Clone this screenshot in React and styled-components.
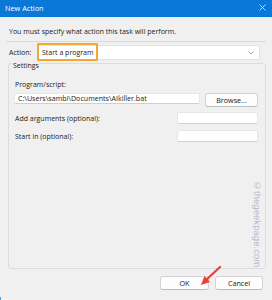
import React from "react";
import styled, { createGlobalStyle } from "styled-components";

const Global = createGlobalStyle`
  *, *::before, *::after { box-sizing: border-box; }
  html, body { margin: 0; padding: 0; }
  body {
    background: #f0f0f0;
    font-family: "Open Sans", "Noto Sans", sans-serif;
    font-size: 7px;
    color: #1a1a1a;
  }
`;

const Window = styled.div`
  position: relative;
  width: 272px;
  height: 300px;
  background: #f0f0f0;
  display: flex;
  flex-direction: column;
  overflow: hidden;
`;

const TitleBar = styled.div`
  flex: none;
  height: 19px;
  background: #0a78d7;
  color: #fff;
  display: flex;
  align-items: center;
  justify-content: space-between;
  padding: 0 6px 2px 5px;
  border-bottom: 2px solid #e9eef3;
`;

const Title = styled.span`
  font-size: 7.3px;
`;

const CloseIcon = styled.svg`
  width: 7px;
  height: 7px;
`;

const Body = styled.div`
  flex: 1;
  display: flex;
  flex-direction: column;
  padding: 0 6px;
`;

const Intro = styled.div`
  padding: 7px 3px 3px;
  line-height: 12px;
`;

const Separator = styled.div`
  height: 1px;
  background: #dadada;
`;

const ActionRow = styled.div`
  display: flex;
  align-items: center;
  margin-top: 3px;
  padding-left: 3px;
  height: 15px;
`;

const ActionLabel = styled.span`
  width: 29px;
  white-space: nowrap;
`;

const Label = styled.span`
  white-space: nowrap;
`;

const Select = styled.div`
  position: relative;
  flex: 1;
  height: 15px;
  margin-right: 6px;
  background: #fff;
  border: 1px solid #e2e2e2;
  border-radius: 2px;
  display: flex;
  align-items: center;
  justify-content: space-between;
  padding: 0 5px 0 3px;
`;

const Highlight = styled.div`
  position: absolute;
  left: -2px;
  top: -3px;
  width: 61px;
  height: 18px;
  border: 2px solid #f1a933;
  border-radius: 1px;
`;

const Chevron = styled.svg`
  width: 6px;
  height: 4px;
`;

const Group = styled.div`
  position: relative;
  flex: none;
  margin: 3px 0 0 2px;
  width: 258px;
  height: 206px;
  border: 1px solid #dcdcdc;
  border-radius: 3px;
  padding: 0 6px;
`;

const Legend = styled.div`
  display: table;
  margin: -3px 0 0 -3px;
  padding: 0 1px;
  line-height: 10px;
  background: #f0f0f0;
`;

const FieldLabel = styled.div`
  line-height: 11px;
  margin-top: 8px;
`;

const PathRow = styled.div`
  display: flex;
  gap: 5px;
  align-items: flex-start;
  margin-top: 3px;
  padding-right: 1px;
`;

const Input = styled.div`
  height: ${(p) => p.$height || "11px"};
  width: ${(p) => p.$width || "auto"};
  flex: ${(p) => (p.$grow ? 1 : "none")};
  margin-left: ${(p) => (p.$grow ? "-1px" : "0")};
  background: #fff;
  border: 1px solid #e6e6e6;
  border-bottom-color: #cfcfcf;
  border-radius: 2px;
  padding: 0 3px;
  font-size: 7.1px;
  line-height: 9px;
  white-space: nowrap;
  overflow: hidden;
`;

const Button = styled.div`
  width: ${(p) => p.$width};
  height: 14px;
  background: #fdfdfd;
  border: 1px solid #d3d3d3;
  border-bottom-color: #bdbdbd;
  border-radius: 3px;
  display: flex;
  align-items: center;
  justify-content: center;
  font-size: 7.2px;
`;

const OptRow = styled.div`
  display: flex;
  align-items: center;
  justify-content: space-between;
  height: 12px;
  margin-top: ${(p) => p.$top};
  padding-right: 1px;
`;

const Watermark = styled.div`
  position: absolute;
  right: 2px;
  top: 116px;
  writing-mode: vertical-rl;
  font-size: 9.6px;
  color: #b9b9cc;
  font-family: "Liberation Sans", sans-serif;
`;

const Footer = styled.div`
  display: flex;
  justify-content: flex-end;
  gap: 6px;
  padding: 7px 3px 0 0;
`;

const Arrow = styled.svg`
  position: absolute;
  left: 198px;
  top: 264px;
  width: 26px;
  height: 24px;
`;

const Corner = styled.div`
  position: absolute;
  left: 0;
  bottom: 0;
  width: 1px;
  height: 3px;
  background: #4aa3e6;
`;

export default function App() {
  return (
    <>
      <Global />
      <Window>
        <TitleBar>
          <Title>New Action</Title>
          <CloseIcon viewBox="0 0 7 7">
            <path d="M0.5 0.5 L6.5 6.5 M6.5 0.5 L0.5 6.5" stroke="#cfe3f7" strokeWidth="0.9" />
          </CloseIcon>
        </TitleBar>
        <Body>
          <Intro>You must specify what action this task will perform.</Intro>
          <Separator />
          <ActionRow>
            <ActionLabel>Action:</ActionLabel>
            <Select>
              <span>Start a program</span>
              <Chevron viewBox="0 0 6 4">
                <path d="M0.5 0.5 L3 3 L5.5 0.5" fill="none" stroke="#888" strokeWidth="0.8" />
              </Chevron>
              <Highlight />
            </Select>
          </ActionRow>
          <Group>
            <Legend>Settings</Legend>
            <FieldLabel>Program/script:</FieldLabel>
            <PathRow>
              <Input $grow>C:\Users\sambi\Documents\AIkiller.bat</Input>
              <Button $width="53px">Browse...</Button>
            </PathRow>
            <OptRow $top="5px">
              <Label>Add arguments (optional):</Label>
              <Input $width="81px" $height="12px" />
            </OptRow>
            <OptRow $top="6px">
              <Label>Start in (optional):</Label>
              <Input $width="81px" $height="12px" />
            </OptRow>
            <Watermark>©thegeekpage.com</Watermark>
          </Group>
          <Footer>
            <Button $width="49px">OK</Button>
            <Button $width="48px">Cancel</Button>
          </Footer>
        </Body>
        <Arrow viewBox="0 0 26 24">
          <path d="M22 3 L8 16" stroke="#e8403a" strokeWidth="2.2" strokeLinecap="round" />
          <path d="M3 21 L6.5 12 L12 18 Z" fill="#e8403a" />
        </Arrow>
        <Corner />
      </Window>
    </>
  );
}
